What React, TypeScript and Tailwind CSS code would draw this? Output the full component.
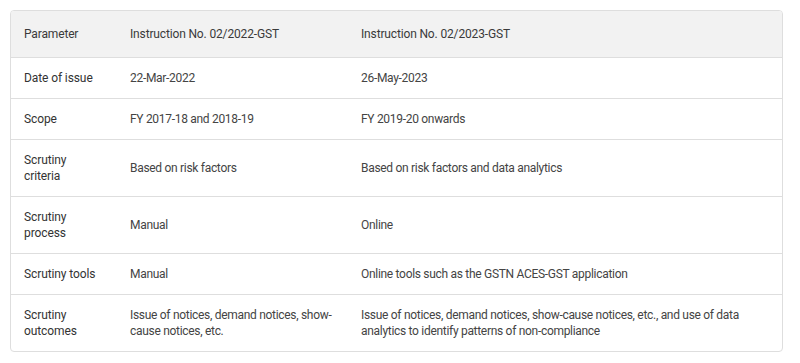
const rows: [string, string, string][] = [
  ["Date of issue", "22-Mar-2022", "26-May-2023"],
  ["Scope", "FY 2017-18 and 2018-19", "FY 2019-20 onwards"],
  ["Scrutiny criteria", "Based on risk factors", "Based on risk factors and data analytics"],
  ["Scrutiny process", "Manual", "Online"],
  ["Scrutiny tools", "Manual", "Online tools such as the GSTN ACES-GST application"],
  [
    "Scrutiny outcomes",
    "Issue of notices, demand notices, show-cause notices, etc.",
    "Issue of notices, demand notices, show-cause notices, etc., and use of data analytics to identify patterns of non-compliance",
  ],
];

export default function App() {
  return (
    <div className="w-[800px] h-[363px] bg-white p-[10px] pr-[17px] font-['Roboto',sans-serif] text-[12px] leading-[16px] text-[#3a3a3a]">
      <div className="rounded-[4px] border border-[#dedede] overflow-hidden">
        <table className="w-full border-collapse table-fixed">
          <colgroup>
            <col className="w-[106px]" />
            <col className="w-[231px]" />
            <col />
          </colgroup>
          <thead>
            <tr className="bg-[#f2f2f2] h-[46px] text-left tracking-[-0.15px]">
              <th className="font-normal px-[13px] align-middle">Parameter</th>
              <th className="font-normal px-[13px] align-middle">Instruction No. 02/2022-GST</th>
              <th className="font-normal px-[13px] align-middle">Instruction No. 02/2023-GST</th>
            </tr>
          </thead>
          <tbody>
            {rows.map((r, i) => (
              <tr key={i} className="border-t border-[#dedede]">
                {r.map((c, j) => (
                  <td
                    key={j}
                    className={`px-[13px] py-[12px] align-middle ${j === 0 ? "text-[#333] tracking-[-0.1px]" : "text-[#444] tracking-[-0.3px]"}`}
                  >
                    {c}
                  </td>
                ))}
              </tr>
            ))}
          </tbody>
        </table>
      </div>
    </div>
  );
}
